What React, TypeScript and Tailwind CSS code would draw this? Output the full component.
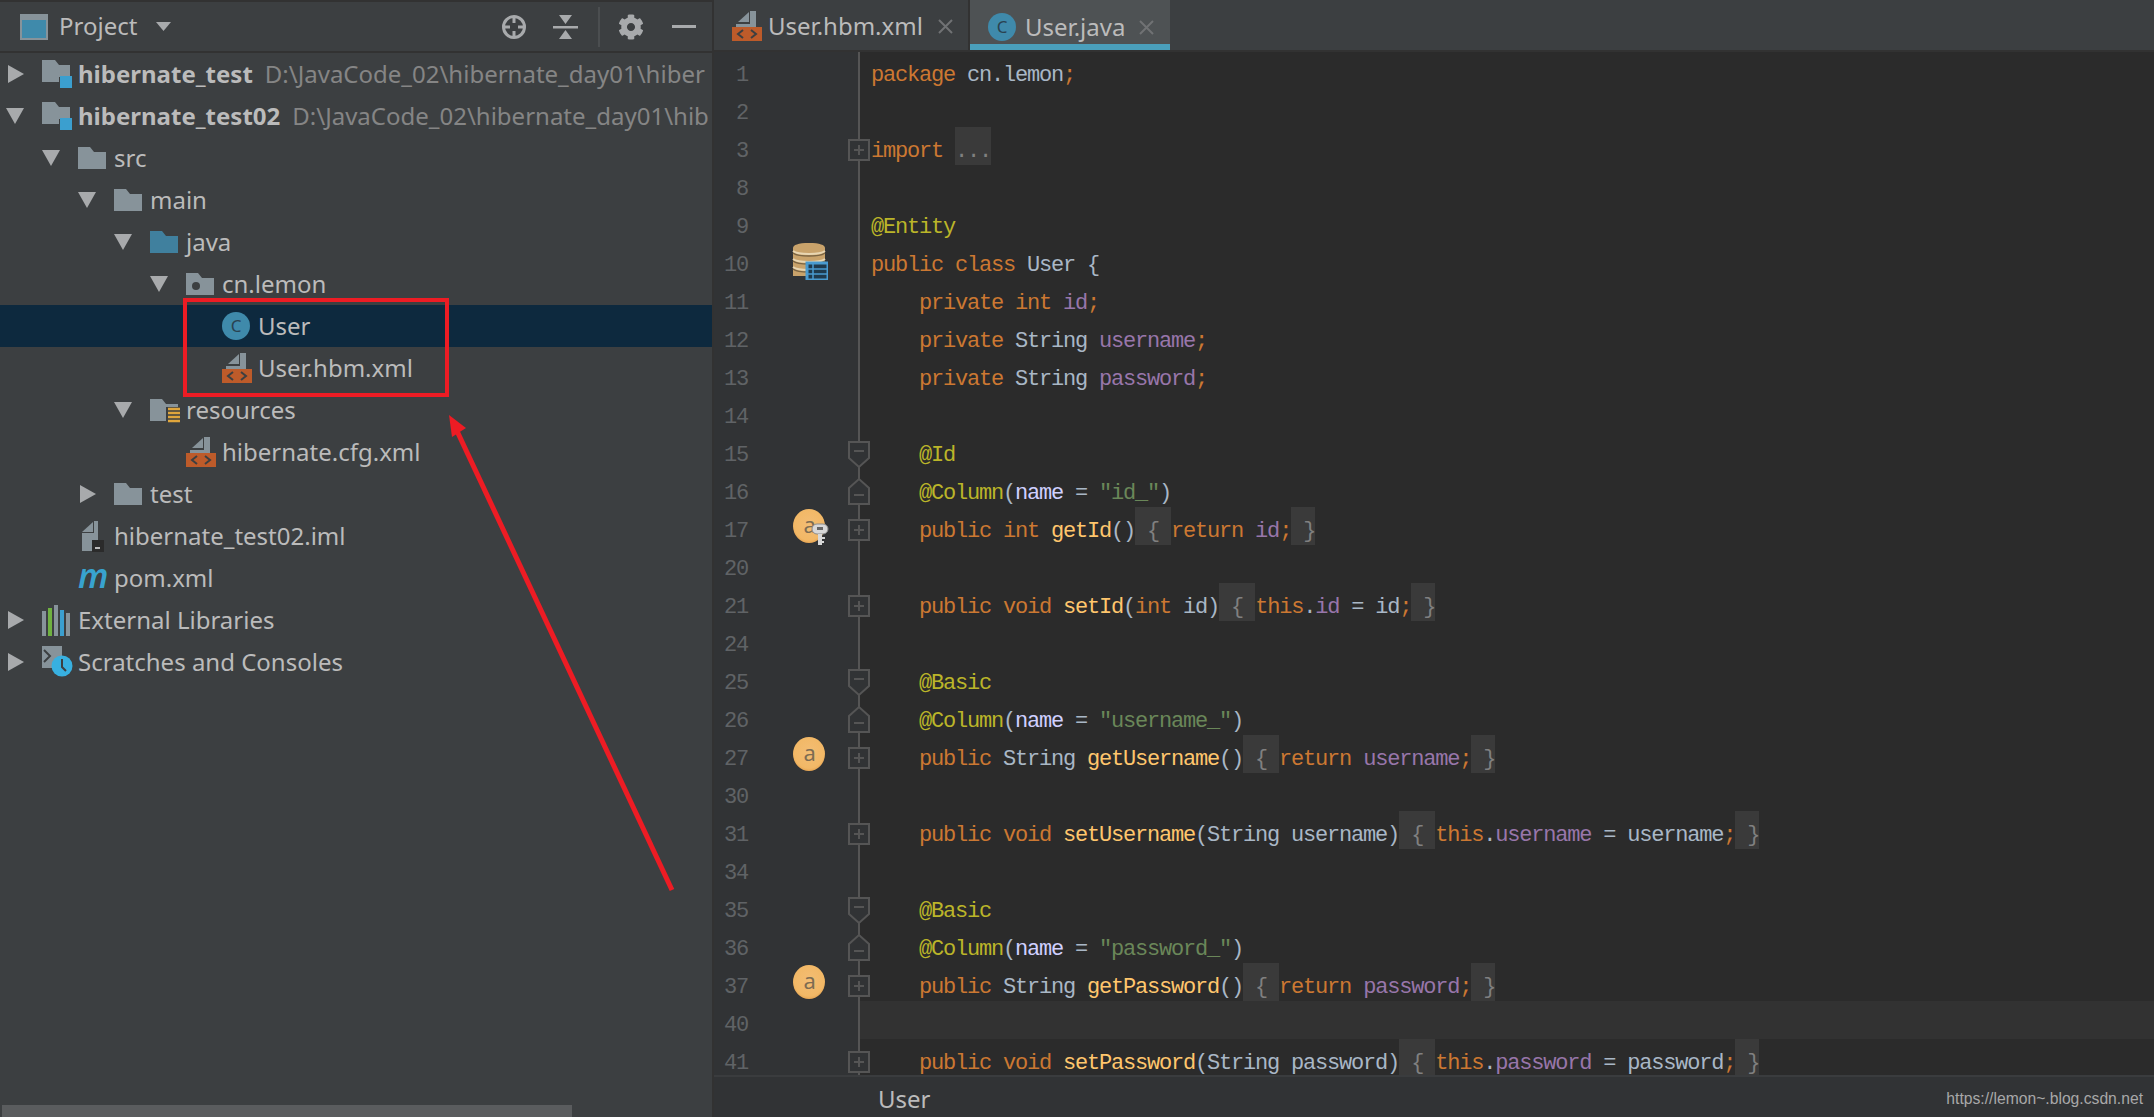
import React from 'react';
import { FaCog } from 'react-icons/fa';

// token colours of the Darcula editor theme
const K = 'text-[#cc7832]';
const P = 'text-[#a9b7c6]';
const F = 'text-[#9876aa]';
const A = 'text-[#bbb529]';
const S = 'text-[#6a8759]';
const M = 'text-[#ffc66d]';
const N = 'text-[#d0d0ff]';
const H = 'HIDE';

type Token = [string, string];
type Fold = 'plus' | 'down' | 'up';

interface Line {
  n: number;
  code?: Token[];
  fold?: Fold;
  mark?: 'db' | 'a' | 'key';
  caret?: boolean;
}

const dim = (t: string): Token => [H, t];

const lines: Line[] = [
  { n: 1, code: [[K, 'package'], [P, ' cn.lemon'], [K, ';']] },
  { n: 2 },
  { n: 3, fold: 'plus', code: [[K, 'import '], dim('...')] },
  { n: 8 },
  { n: 9, code: [[A, '@Entity']] },
  { n: 10, mark: 'db', code: [[K, 'public class '], [P, 'User {']] },
  { n: 11, code: [[P, '    '], [K, 'private int '], [F, 'id'], [K, ';']] },
  { n: 12, code: [[P, '    '], [K, 'private '], [P, 'String '], [F, 'username'], [K, ';']] },
  { n: 13, code: [[P, '    '], [K, 'private '], [P, 'String '], [F, 'password'], [K, ';']] },
  { n: 14 },
  { n: 15, fold: 'down', code: [[P, '    '], [A, '@Id']] },
  { n: 16, fold: 'up', code: [[P, '    '], [A, '@Column'], [P, '('], [N, 'name'], [P, ' = '], [S, '"id_"'], [P, ')']] },
  { n: 17, fold: 'plus', mark: 'key', code: [[P, '    '], [K, 'public int '], [M, 'getId'], [P, '()'], dim(' { '), [K, 'return '], [F, 'id'], [K, ';'], dim(' }')] },
  { n: 20 },
  { n: 21, fold: 'plus', code: [[P, '    '], [K, 'public void '], [M, 'setId'], [P, '('], [K, 'int '], [P, 'id)'], dim(' { '), [K, 'this'], [P, '.'], [F, 'id'], [P, ' = id'], [K, ';'], dim(' }')] },
  { n: 24 },
  { n: 25, fold: 'down', code: [[P, '    '], [A, '@Basic']] },
  { n: 26, fold: 'up', code: [[P, '    '], [A, '@Column'], [P, '('], [N, 'name'], [P, ' = '], [S, '"username_"'], [P, ')']] },
  { n: 27, fold: 'plus', mark: 'a', code: [[P, '    '], [K, 'public '], [P, 'String '], [M, 'getUsername'], [P, '()'], dim(' { '), [K, 'return '], [F, 'username'], [K, ';'], dim(' }')] },
  { n: 30 },
  { n: 31, fold: 'plus', code: [[P, '    '], [K, 'public void '], [M, 'setUsername'], [P, '(String username)'], dim(' { '), [K, 'this'], [P, '.'], [F, 'username'], [P, ' = username'], [K, ';'], dim(' }')] },
  { n: 34 },
  { n: 35, fold: 'down', code: [[P, '    '], [A, '@Basic']] },
  { n: 36, fold: 'up', code: [[P, '    '], [A, '@Column'], [P, '('], [N, 'name'], [P, ' = '], [S, '"password_"'], [P, ')']] },
  { n: 37, fold: 'plus', mark: 'a', code: [[P, '    '], [K, 'public '], [P, 'String '], [M, 'getPassword'], [P, '()'], dim(' { '), [K, 'return '], [F, 'password'], [K, ';'], dim(' }')] },
  { n: 40, caret: true },
  { n: 41, fold: 'plus', code: [[P, '    '], [K, 'public void '], [M, 'setPassword'], [P, '(String password)'], dim(' { '), [K, 'this'], [P, '.'], [F, 'password'], [P, ' = password'], [K, ';'], dim(' }')] },
];

function Folder({ color = '#87939a', children }: { color?: string; children?: React.ReactNode }) {
  return (
    <svg width="30" height="30" viewBox="0 0 30 30" className="overflow-visible">
      <path d="M0 4H12L16 9H28V26H0Z" fill={color} />
      {children}
    </svg>
  );
}

function ModuleIcon() {
  return (
    <svg width="30" height="30" viewBox="0 0 30 30" className="overflow-visible">
      <path d="M0 1H13L17 6H28V18H17V23H0Z" fill="#87939a" />
      <rect x="18" y="17" width="12" height="12" fill="#3b9fcf" />
    </svg>
  );
}

function ClassIcon({ size = 28 }: { size?: number }) {
  return (
    <svg width={size} height={size} viewBox="0 0 28 28">
      <circle cx="14" cy="14" r="14" fill="#3f8aab" />
      <text x="14" y="20" textAnchor="middle" fontSize="17" fontFamily="'Noto Sans', sans-serif" fill="#2a4251">C</text>
    </svg>
  );
}

function XmlIcon() {
  return (
    <svg width="30" height="30" viewBox="0 0 30 30" className="overflow-visible">
      <path d="M6 11L17 1V11Z" fill="#87939a" />
      <path d="M18 0H24V16H4V13H18Z" fill="#87939a" />
      <rect x="0" y="16" width="30" height="14" fill="#bd5b2a" />
      <path d="M11 19L6 23L11 27M19 19L24 23L19 27" fill="none" stroke="#3c3f41" strokeWidth="2" />
    </svg>
  );
}

function ImlIcon() {
  return (
    <svg width="30" height="30" viewBox="0 0 30 30" className="overflow-visible">
      <path d="M4 11L15 1V11Z" fill="#87939a" />
      <path d="M16 0H20V20H15V30H4V12H16Z" fill="#87939a" />
      <rect x="14" y="19" width="12" height="12" fill="#2b2b2b" />
      <rect x="17" y="26" width="5" height="2" fill="#bbbbbb" />
    </svg>
  );
}

function LibIcon() {
  return (
    <svg width="30" height="30" viewBox="0 0 30 30" className="overflow-visible">
      <rect x="0" y="6" width="4" height="25" fill="#87939a" />
      <rect x="6" y="3" width="4" height="28" fill="#6fb141" />
      <rect x="12" y="0" width="4" height="31" fill="#87939a" />
      <rect x="18" y="5" width="4" height="26" fill="#3b9fcf" />
      <rect x="24" y="8" width="4" height="23" fill="#87939a" />
    </svg>
  );
}

function ScratchIcon() {
  return (
    <svg width="32" height="32" viewBox="0 0 32 32" className="overflow-visible">
      <path d="M0 0H20V11L13 18V22H0Z" fill="#87939a" />
      <path d="M2 4L8 10L2 16" fill="none" stroke="#3c3f41" strokeWidth="2" />
      <circle cx="20" cy="20" r="10.500" fill="#38b0e0" />
      <path d="M20 13V21L24 25" fill="none" stroke="#3c3f41" strokeWidth="2" />
    </svg>
  );
}

interface TreeRow {
  depth: number;
  icon: React.ReactNode;
  name: string;
  path?: string;
  arrow?: 'open' | 'closed';
  selected?: boolean;
}

const tree: TreeRow[] = [
  { depth: 0, arrow: 'closed', icon: <ModuleIcon />, name: 'hibernate_test', path: 'D:\\JavaCode_02\\hibernate_day01\\hiber' },
  { depth: 0, arrow: 'open', icon: <ModuleIcon />, name: 'hibernate_test02', path: 'D:\\JavaCode_02\\hibernate_day01\\hib' },
  { depth: 1, arrow: 'open', icon: <Folder />, name: 'src' },
  { depth: 2, arrow: 'open', icon: <Folder />, name: 'main' },
  { depth: 3, arrow: 'open', icon: <Folder color="#40809e" />, name: 'java' },
  { depth: 4, arrow: 'open', icon: <Folder><circle cx="10" cy="17" r="4" fill="#3c3f41" /></Folder>, name: 'cn.lemon' },
  { depth: 5, icon: <ClassIcon />, name: 'User', selected: true },
  { depth: 5, icon: <XmlIcon />, name: 'User.hbm.xml' },
  {
    depth: 3,
    arrow: 'open',
    name: 'resources',
    icon: (
      <Folder>
        <rect x="16" y="12" width="14" height="18" fill="#3c3f41" />
        <path d="M18 14H30M18 18H30M18 22H30M18 26H30" stroke="#e0a63c" strokeWidth="2.500" />
      </Folder>
    ),
  },
  { depth: 4, icon: <XmlIcon />, name: 'hibernate.cfg.xml' },
  { depth: 2, arrow: 'closed', icon: <Folder />, name: 'test' },
  { depth: 1, icon: <ImlIcon />, name: 'hibernate_test02.iml' },
  { depth: 1, icon: <span className="block h-[30px] font-['Noto_Sans'] text-[34px] leading-[24px] font-semibold italic text-[#38a3cf]">m</span>, name: 'pom.xml' },
  { depth: 0, arrow: 'closed', icon: <LibIcon />, name: 'External Libraries' },
  { depth: 0, arrow: 'closed', icon: <ScratchIcon />, name: 'Scratches and Consoles' },
];

function TreeArrow({ open }: { open: boolean }) {
  return (
    <svg width="18" height="18" viewBox="0 0 18 18">
      {open ? <path d="M0 1H18L9 17Z" fill="#a8aaac" /> : <path d="M2 0L18 9L2 18Z" fill="#a8aaac" />}
    </svg>
  );
}

function Row({ row }: { row: TreeRow }) {
  return (
    <div
      className={`flex h-[42px] items-center whitespace-nowrap text-[#bbbbbb] ${row.selected ? 'bg-[#0d293e]' : ''}`}
      style={{ paddingLeft: row.depth * 36 }}
    >
      <div className="flex w-[42px] shrink-0 pl-[6px]">{row.arrow && <TreeArrow open={row.arrow === 'open'} />}</div>
      <div className="flex w-[36px] shrink-0 items-center">{row.icon}</div>
      <span className={`shrink-0 ${row.path ? 'font-bold' : ''}`}>{row.name}</span>
      {row.path && <span className="ml-[12px] min-w-0 overflow-hidden text-[#858585]">{row.path}</span>}
    </div>
  );
}

function ProjectPanel() {
  return (
    <aside className="flex w-[712px] shrink-0 flex-col overflow-hidden bg-[#3c3f41]">
      <div className="flex h-[53px] shrink-0 items-center border-y-2 border-[#323232] pr-[16px] pl-[20px] text-[#bbbbbb]">
        <svg width="28" height="26" viewBox="0 0 28 26">
          <rect x="1" y="1" width="26" height="24" fill="#3f8aab" stroke="#87939a" strokeWidth="2" />
          <rect x="1" y="1" width="26" height="5" fill="#87939a" />
        </svg>
        <span className="ml-[11px] -translate-y-[1px]">Project</span>
        <svg width="15" height="9" viewBox="0 0 15 9" className="ml-[19px]">
          <path d="M0 0H15L7.500 9Z" fill="#a8aaac" />
        </svg>
        <svg width="24" height="24" viewBox="0 0 24 24" className="ml-auto" fill="none" stroke="#a8aaac" strokeWidth="3">
          <circle cx="12" cy="12" r="10.500" />
          <path d="M12 1V8M12 16V23M1 12H8M16 12H23" />
        </svg>
        <svg width="25" height="24" viewBox="0 0 25 24" className="ml-[27px]" fill="#a8aaac">
          <path d="M6 0H19L12.500 9ZM0 11H25V13.500H0ZM6 24H19L12.500 15Z" />
        </svg>
        <div className="ml-[20px] h-[40px] w-[2px] bg-[#4b4e50]" />
        <FaCog className="ml-[18px] text-[26px] text-[#a8aaac]" />
        <div className="ml-[28px] h-[3px] w-[24px] bg-[#a8aaac]" />
      </div>
      <div className="flex-1">
        {tree.map((row) => (
          <Row key={row.name + row.depth} row={row} />
        ))}
      </div>
      <div className="ml-[2px] h-[12px] w-[570px] shrink-0 bg-[#5a5c5e]" />
    </aside>
  );
}

function CloseX() {
  return (
    <svg width="15" height="15" viewBox="0 0 15 15" stroke="#707274" strokeWidth="2">
      <path d="M1 1L14 14M14 1L1 14" />
    </svg>
  );
}

function FoldMarker({ kind }: { kind: Fold }) {
  return (
    <svg width="22" height="30" viewBox="0 0 22 30" className="absolute right-[-12px] z-10" fill="#313335" stroke="#555555" strokeWidth="2">
      {kind === 'plus' && <rect x="1" y="5" width="20" height="20" />}
      {kind === 'down' && <path d="M1 3H21V19L11 28L1 19Z" />}
      {kind === 'up' && <path d="M1 27H21V11L11 2L1 11Z" />}
      <path d={kind === 'plus' ? 'M6 15H16M11 10V20' : kind === 'down' ? 'M6 12H16' : 'M6 18H16'} strokeWidth="2" />
    </svg>
  );
}

function GutterA({ withKey }: { withKey?: boolean }) {
  return (
    <svg width="36" height="38" viewBox="0 0 36 38" className="-translate-y-[4px] overflow-visible">
      <defs>
        <radialGradient id="amber" cx="50%" cy="45%" r="55%">
          <stop offset="0%" stopColor="#f3bd74" />
          <stop offset="85%" stopColor="#f2b866" />
          <stop offset="100%" stopColor="#e7a654" />
        </radialGradient>
      </defs>
      <ellipse cx="17" cy="19" rx="16" ry="17" fill="url(#amber)" />
      <text x="17" y="26" textAnchor="middle" fontSize="22" fontFamily="'Noto Sans', sans-serif" fill="#7d6c52">a</text>
      {withKey && (
        <g>
          <rect x="20" y="17" width="16" height="10" rx="5" fill="#d8d8d8" stroke="#8c8c8c" />
          <rect x="25" y="20" width="6" height="3" fill="#666" />
          <path d="M26 27H30V38H26Z" fill="#d8d8d8" />
          <path d="M30 31H33M30 35H32" stroke="#d8d8d8" strokeWidth="2" />
        </g>
      )}
    </svg>
  );
}

function DbIcon() {
  return (
    <svg width="36" height="37" viewBox="0 0 36 37" className="-translate-y-[3px]">
      <path d="M1 5C1 2 6 0 17 0S33 2 33 5V33H1Z" fill="#c9a36b" />
      <path d="M1 8C6 12 28 12 33 8M1 16C6 20 28 20 33 16M1 24C6 28 28 28 33 24" fill="none" stroke="#e8d6b2" strokeWidth="2" />
      <path d="M1 10C6 14 28 14 33 10M1 18C6 22 28 22 33 18M1 26C6 30 28 30 33 26" fill="none" stroke="#7c6644" strokeWidth="1.500" />
      <rect x="15" y="20" width="21" height="17" fill="#1f3a4d" stroke="#4a9bd0" strokeWidth="3" />
      <path d="M16 26H35M16 31H35M21 21V36" stroke="#4a9bd0" strokeWidth="1.500" />
    </svg>
  );
}

function Editor() {
  return (
    <div className="flex min-h-0 flex-1 overflow-hidden font-['Liberation_Mono'] text-[22px] tracking-[-1.200px] whitespace-pre">
      <div className="relative w-[146px] shrink-0 border-r-2 border-[#555555] bg-[#313335] pt-[3px] leading-[42px]">
        {lines.map((line) => (
          <div key={line.n} className="relative flex h-[38px] items-center text-[#606366]">
            <span className="w-[34px] translate-y-[2px] text-right">{line.n}</span>
            <span className="ml-[44px] flex">
              {line.mark === 'db' && <DbIcon />}
              {line.mark === 'a' && <GutterA />}
              {line.mark === 'key' && <GutterA withKey />}
            </span>
            {line.fold && <FoldMarker kind={line.fold} />}
          </div>
        ))}
      </div>
      {/* rows sit 4px above the text baseline, the fold placeholders and caret line fill the row box */}
      <div className="-mt-[1px] min-w-0 flex-1 leading-[50px]">
        {lines.map((line) => (
          <div key={line.n} className={`h-[38px] pl-[11px] ${line.caret ? 'bg-[#323232]' : ''}`}>
            {line.code?.map(([cls, text], i) =>
              cls === H ? (
                <span key={i} className="inline-block h-[38px] bg-[#3a3a3a] align-top text-[#808080]">
                  {text}
                </span>
              ) : (
                <span key={i} className={cls}>
                  {text}
                </span>
              ),
            )}
          </div>
        ))}
      </div>
    </div>
  );
}

export default function App() {
  return (
    <div className="relative flex h-[1117px] w-[2154px] overflow-hidden bg-[#2b2b2b] font-['Noto_Sans'] text-[24px]">
      <ProjectPanel />

      <main className="flex min-w-0 flex-1 flex-col border-l-2 border-[#323232]">
        <div className="flex h-[52px] shrink-0 border-y-2 border-t-0 border-[#323232] bg-[#3c3f41] text-[#bbbbbb]">
          <div className="flex w-[256px] items-center border-r-2 border-[#323232] pt-[2px] pl-[18px]">
            <XmlIcon />
            <span className="ml-[6px]">User.hbm.xml</span>
            <span className="ml-[15px] flex"><CloseX /></span>
          </div>
          <div className="flex w-[200px] items-center border-b-[6px] border-[#4a9fbb] bg-[#4e5254] pt-[10px] pl-[18px]">
            <ClassIcon />
            <span className="ml-[9px]">User.java</span>
            <span className="ml-[14px] flex"><CloseX /></span>
          </div>
        </div>
        <Editor />
        <div className="relative flex h-[42px] shrink-0 items-center border-t-2 border-[#3a3c3e] bg-[#313335] pt-[4px] pl-[164px] text-[#bbbbbb]">
          User
          <span className="absolute right-[11px] top-[12px] font-['Liberation_Sans'] text-[15.700px] leading-[20px] text-[#a8a8a8]">https://lemon~.blog.csdn.net</span>
        </div>
      </main>

      {/* red annotation drawn over the screenshot */}
      <div className="pointer-events-none absolute top-[298px] left-[183px] h-[99px] w-[266px] border-4 border-[#ed1c24]" />
      <svg className="pointer-events-none absolute inset-0" width="2154" height="1117" viewBox="0 0 2154 1117">
        <path d="M457 431L672 890" stroke="#ed1c24" strokeWidth="5" />
        <path d="M449 415L466 428L452 437Z" fill="#ed1c24" />
      </svg>
    </div>
  );
}
